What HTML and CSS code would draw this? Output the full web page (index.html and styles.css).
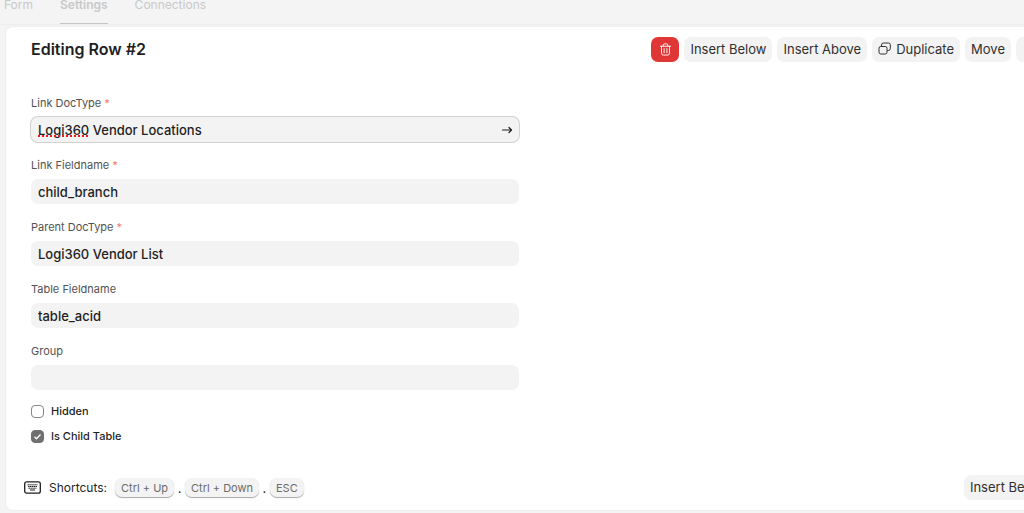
FILE: index.html
```html
<!DOCTYPE html>
<html lang="en">
<head>
<meta charset="utf-8">
<title>Editing Row #2</title>
<link rel="stylesheet" href="styles.css">
</head>
<body>
<nav class="tabs">
  <a class="tab" href="#form">Form</a>
  <a class="tab active" href="#settings">Settings</a>
  <a class="tab" href="#connections">Connections</a>
</nav>
<main class="card">
  <header class="card-head">
    <h1 class="title">Editing Row #2</h1>
    <div class="actions">
      <button class="btn btn-danger" type="button" aria-label="Delete">
        <svg width="13" height="13" viewBox="0 0 14 14" fill="none" stroke="currentColor" stroke-linecap="round" stroke-linejoin="round"><path d="M1.500 3.500h11M4.500 3.500V2.200Q4.500 1 5.700 1h2.600Q9.500 1 9.500 2.200v1.300M2.700 3.500v7.500q0 2 2 2h4.600q2 0 2-2V3.500M5.500 6v4.500M8.500 6v4.500"/></svg>
      </button>
      <button class="btn" type="button">Insert Below</button>
      <button class="btn" type="button">Insert Above</button>
      <button class="btn" type="button">
        <svg class="copy" width="13" height="13" viewBox="0 0 13 13" fill="none" stroke="currentColor" stroke-linejoin="round"><rect x="1" y="4.500" width="8" height="7.500" rx="1.800"/><path d="M3.500 4.200V3q0-2 2-2h5Q12.300 1 12.300 2.800v3.700q0 2-2 2H9.300"/></svg>
        Duplicate</button>
      <button class="btn" type="button">Move</button>
      <button class="btn btn-icon" type="button" aria-label="Collapse">
        <svg width="12" height="12" viewBox="0 0 12 12" fill="none" stroke="currentColor"><path d="M2 8l4-4 4 4"/></svg>
      </button>
    </div>
  </header>
  <form class="columns">
    <div class="column">
      <div class="field">
        <label class="label" for="link-doctype">Link DocType <span class="req">*</span></label>
        <div class="control focused">
          <input class="input" id="link-doctype" type="text" value="Logi360 Vendor Locations">
          <span class="misspelt" aria-hidden="true"></span>
          <a class="open-link" href="#open" aria-label="Open link"><svg width="12" height="10" viewBox="0 0 12 10" fill="none" stroke="currentColor" stroke-width="1.200" stroke-linecap="round" stroke-linejoin="round"><path d="M1.500 5h9M8 2.500L10.500 5 8 7.500"/></svg></a>
        </div>
      </div>
      <div class="field">
        <label class="label" for="link-fieldname">Link Fieldname <span class="req">*</span></label>
        <div class="control"><input class="input" id="link-fieldname" type="text" value="child_branch"></div>
      </div>
      <div class="field">
        <label class="label" for="parent-doctype">Parent DocType <span class="req">*</span></label>
        <div class="control"><input class="input" id="parent-doctype" type="text" value="Logi360 Vendor List"></div>
      </div>
      <div class="field">
        <label class="label" for="table-fieldname">Table Fieldname</label>
        <div class="control"><input class="input" id="table-fieldname" type="text" value="table_acid"></div>
      </div>
      <div class="field">
        <label class="label" for="group">Group</label>
        <div class="control"><input class="input" id="group" type="text"></div>
      </div>
      <div class="checks">
        <label class="check"><input class="box" type="checkbox">Hidden</label>
        <label class="check"><input class="box" type="checkbox" checked>Is Child Table</label>
      </div>
    </div>
  </form>
  <footer class="card-foot">
    <div class="shortcuts">
      <svg class="keyboard" width="17" height="13" viewBox="0 0 17 13" fill="none" stroke="currentColor"><rect x=".7" y=".8" width="15.600" height="11.400" rx="2" stroke-width="1.300"/><path d="M3.500 3.800h10M4 5.500h9M4.500 7.200h8" stroke-dasharray="1.500 .4"/><path d="M6 9h5"/></svg>
      <span class="caption">Shortcuts:</span>
      <kbd class="key">Ctrl + Up</kbd><span class="dot">.</span><kbd class="key">Ctrl + Down</kbd><span class="dot">.</span><kbd class="key">ESC</kbd>
    </div>
    <button class="btn" type="button">Insert Below</button>
  </footer>
</main>
</body>
</html>
```
FILE: styles.css
```css
* {
  box-sizing: border-box;
}

body {
  margin: 0;
  overflow: hidden;
  background: #f4f4f4;
  color: #1f1f1f;
  font-family: Inter, "Liberation Sans", sans-serif;
  font-size: 13px;
  line-height: 16px;
}

.tabs {
  display: flex;
  gap: 27px;
  height: 25px;
  padding-left: 4px;
  border-bottom: 1px solid #efefef;
  font-size: 12px;
}

.tab {
  height: 24px;
  padding-bottom: 11px;
  display: flex;
  align-items: flex-end;
  color: #c9c9c9;
  text-decoration: none;
}

.tab.active {
  border-bottom: 1px solid #c4c4c4;
  padding-bottom: 10px;
  font-weight: 600;
}

/* The card runs past the right edge of the window. */
.card {
  margin: 1px -55px 0 5px;
  padding: 10px 26px 10px 25px;
  border: 1px solid #eeeeee;
  border-radius: 8px;
  background: #fff;
}

.card-head,
.card-foot,
.actions,
.shortcuts {
  display: flex;
  align-items: center;
}

.card-head,
.card-foot {
  justify-content: space-between;
}

.title {
  margin: 0;
  font-size: 16px;
  line-height: 27px;
  font-weight: 600;
}

.card-head {
  height: 25px;
}

.actions {
  gap: 5px;
}

.btn {
  display: flex;
  align-items: center;
  gap: 5px;
  height: 25px;
  padding: 0 6px 2px;
  border: 0;
  border-radius: 7px;
  background: #f3f3f3;
  color: #303030;
  font: inherit;
  white-space: nowrap;
}

.btn-danger {
  width: 28px;
  padding: 0;
  justify-content: center;
  background: #e03636;
  color: #fff;
}

.btn-icon {
  width: 36px;
  justify-content: center;
}

.columns {
  display: grid;
  grid-template-columns: 1fr 1fr;
  gap: 46px;
  padding-top: 33px;
}

.field {
  display: flex;
  flex-direction: column;
  gap: 6px;
  margin-bottom: 15px;
}

.label {
  color: #525252;
  font-size: 11px;
  line-height: 16px;
}

.req {
  color: #ee7a7a;
}

.control {
  position: relative;
  display: flex;
  align-items: center;
  height: 25px;
  border-radius: 7px;
  background: #f3f3f3;
}

.control.focused {
  box-shadow: 0 0 0 1px #d2d2d2;
}

.input {
  flex: 1;
  min-width: 0;
  padding: 0 7px;
  border: 0;
  outline: 0;
  background: none;
  color: #1f1f1f;
  font: inherit;
  font-weight: 500;
}

.misspelt {
  position: absolute;
  left: 7px;
  bottom: 5px;
  width: 51px;
  height: 2px;
  background: repeating-linear-gradient(90deg, #f01818 0 2px, transparent 2px 4px);
}

.open-link {
  display: flex;
  padding-right: 6px;
  color: #1f1f1f;
}

.checks {
  display: flex;
  flex-direction: column;
  gap: 9px;
  margin-top: -2px;
}

.check {
  display: flex;
  align-items: center;
  gap: 7px;
  font-size: 11px;
  line-height: 16px;
  font-weight: 500;
}

.box {
  appearance: none;
  width: 13px;
  height: 13px;
  margin: 0;
  border: 1px solid #858585;
  border-radius: 4px;
  background: #fff;
}

.box:checked {
  border-color: #707070;
  background: #707070 url("data:image/svg+xml,%3Csvg xmlns='http://www.w3.org/2000/svg' viewBox='0 0 11 11' fill='none' stroke='white' stroke-width='1.300'%3E%3Cpath d='M2.500 5.800l2 2L8.500 3.500'/%3E%3C/svg%3E") center / 11px 11px no-repeat;
}

.card-foot {
  margin: 31px 0 0 -7px;
}

.keyboard {
  margin-right: 8px;
}

.caption {
  margin-right: 8px;
  font-size: 12px;
}

.key {
  padding: 2px 6px 1px;
  border-radius: 7px;
  background: #f3f3f3;
  box-shadow: 0 1px 1px #a8a8a8;
  color: #6b6b6b;
  font: inherit;
  font-size: 11px;
}

.dot {
  width: 11px;
  text-align: center;
}
```
